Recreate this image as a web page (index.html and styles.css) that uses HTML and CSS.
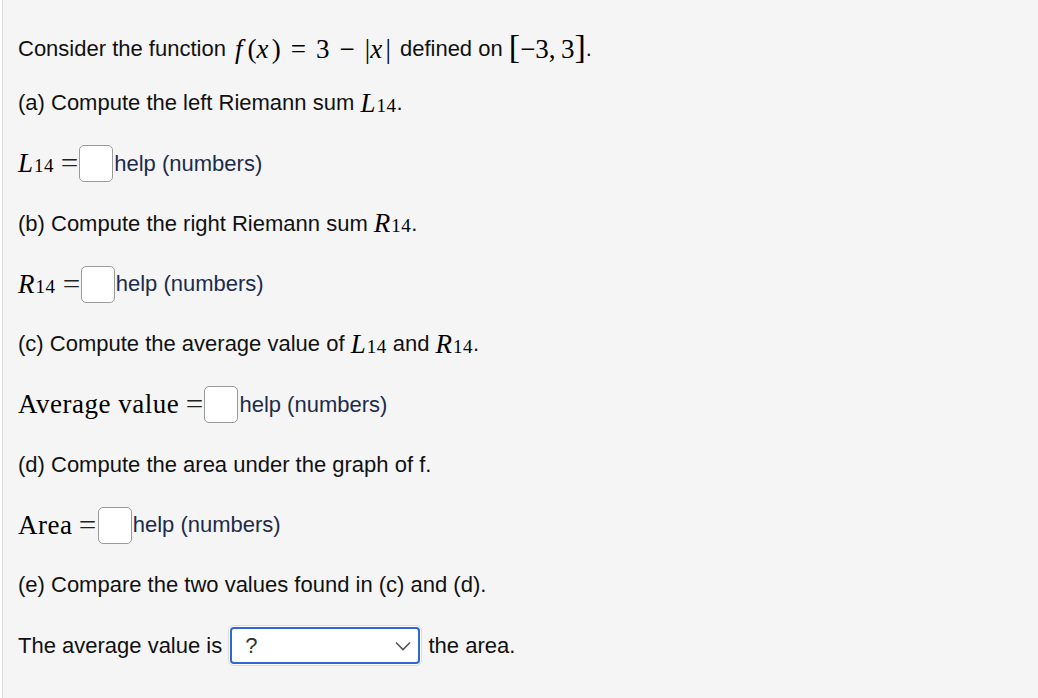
FILE: index.html
```html
<!DOCTYPE html>
<html>
<head>
<meta charset="utf-8">
<link rel="stylesheet" href="styles.css">
</head>
<body>
<div class="problem">
  <div class="row first">Consider the function&nbsp;<span class="m f"><i class="fi">f</i>(<i>x</i>&#8202;)<span class="op">=</span>3<span class="op">−</span>|<i>x</i>&#8202;|</span>&nbsp;defined on&nbsp;<span class="m"><span class="br">[</span>−3,&#8201;3<span class="br">]</span></span>.</div>
  <div class="row">(a) Compute the left Riemann sum&nbsp;<span class="m"><i>L</i><sub>14</sub></span>.</div>
  <div class="row"><span class="m"><i>L</i><sub>14</sub><span class="eq">=</span></span><span class="box"></span><a class="help">help (numbers)</a></div>
  <div class="row">(b) Compute the right Riemann sum&nbsp;<span class="m"><i>R</i><sub>14</sub></span>.</div>
  <div class="row"><span class="m"><i>R</i><sub>14</sub><span class="eq">=</span></span><span class="box"></span><a class="help">help (numbers)</a></div>
  <div class="row">(c) Compute the average value of&nbsp;<span class="m"><i>L</i><sub>14</sub></span>&nbsp;and&nbsp;<span class="m"><i>R</i><sub>14</sub></span>.</div>
  <div class="row"><span class="m"><span class="tx">Average value</span><span class="eq">=</span></span><span class="box"></span><a class="help">help (numbers)</a></div>
  <div class="row">(d) Compute the area under the graph of f.</div>
  <div class="row"><span class="m"><span class="tx">Area</span><span class="eq">=</span></span><span class="box"></span><a class="help">help (numbers)</a></div>
  <div class="row">(e) Compare the two values found in (c) and (d).</div>
  <div class="row">The average value is&nbsp;<span class="ring"><span class="select"><span class="q">?</span><svg class="chev" width="16" height="10" viewBox="0 0 16 10"><path d="M1 1.5 L8 8.5 L15 1.5" fill="none" stroke="#555" stroke-width="1.6"/></svg></span></span>&nbsp;the area.</div>
</div>
</body>
</html>
```
FILE: styles.css
```css
html, body {
  margin: 0;
  padding: 0;
  background: #ffffff;
}
.problem {
  margin-left: 2px;
  border-left: 1px solid #dcdcdc;
  background: #f5f5f5;
  height: 698px;
  box-sizing: border-box;
  padding: 36px 0 0 15px;
  display: flex;
  flex-direction: column;
  gap: 22.25px;
  font-family: "Liberation Sans", Arial, sans-serif;
  font-size: 22px;
  color: #111;
}
.row {
  height: 38px;
  display: flex;
  align-items: center;
  white-space: pre;
}
.row.first {
  height: 26px;
}
.m {
  font-family: "Liberation Serif", "Times New Roman", serif;
  font-size: 27px;
  color: #000;
  display: inline-flex;
  align-items: baseline;
}
.m.f {
  margin-left: 3px;
  margin-right: 3px;
}
.m i {
  font-style: italic;
  letter-spacing: 1px;
}
.m i.fi {
  margin-right: 4px;
}
.tx {
  letter-spacing: 0.5px;
}
.m sub {
  font-size: 19px;
  vertical-align: -6px;
  line-height: 0;
  letter-spacing: 0.5px;
}
.op {
  margin: 0 10px;
}
.eq {
  margin-left: 8px;
  margin-right: 2px;
  color: #222;
  display: inline-block;
  transform: scaleX(1.15);
}
.br {
  font-size: 34px;
  line-height: 0;
  font-weight: 300;
}
.box {
  display: inline-block;
  width: 32px;
  height: 35px;
  background: #fff;
  border: 1px solid #9a9a9a;
  border-radius: 5px;
}
.help {
  color: #1c2b4c;
  margin-left: 1px;
}
.ring {
  display: inline-flex;
  padding: 1px;
  border: 1px solid #dadada;
  border-radius: 6px;
  background: #fff;
}
.select {
  height: 33px;
  border: 2px solid #2e67d3;
  border-radius: 4px;
  background: #fff;
  display: flex;
  align-items: center;
  justify-content: space-between;
  padding: 0 7px 0 13px;
  box-sizing: content-box;
  width: 166px;
}
.q {
  color: #333;
  font-size: 22px;
}
.chev {
  display: block;
}
```
